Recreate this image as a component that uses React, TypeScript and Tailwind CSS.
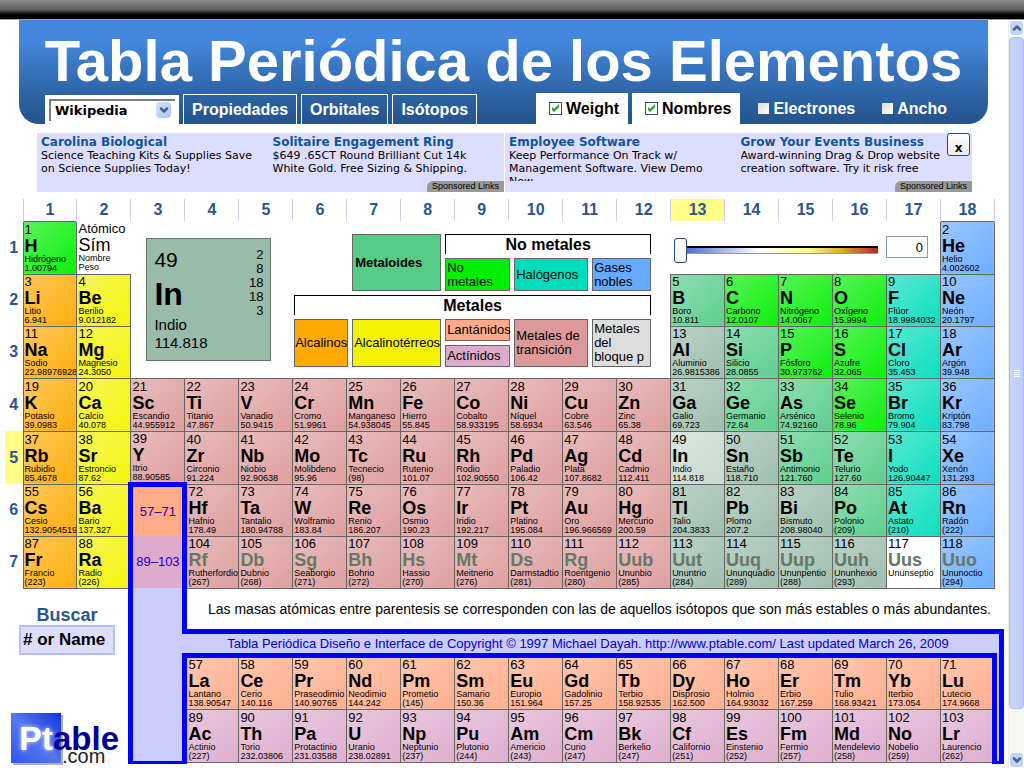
import { useState } from "react"
import { ChevronDown, ChevronUp } from "lucide-react"

type Category =
  | "alkali"
  | "alkaline"
  | "transition"
  | "poor"
  | "metalloid"
  | "nonmetal"
  | "halogen"
  | "noble"
  | "lanthanide"
  | "actinide"
  | "unknown"
  | "selected"

type ElementRow = [number, string, string, string, Category]

const cellColors: Record<Category, string> = {
  alkali: "bg-[#ffaa00]",
  alkaline: "bg-[#f3f300]",
  transition: "bg-[#dd9999]",
  poor: "bg-[#99bbaa]",
  metalloid: "bg-[#55cc88]",
  nonmetal: "bg-[#00ee00]",
  halogen: "bg-[#00ddbb]",
  noble: "bg-[#66aaff]",
  lanthanide: "bg-[#ffaa88]",
  actinide: "bg-[#ddaacc]",
  unknown: "bg-white",
  selected: "bg-[#c4d8ce]",
}

const row1: ElementRow[] = [
  [1, "H", "Hidrógeno", "1.00794", "nonmetal"],
  [2, "He", "Helio", "4.002602", "noble"],
]

const row2: ElementRow[] = [
  [3, "Li", "Litio", "6.941", "alkali"],
  [4, "Be", "Berilio", "9.012182", "alkaline"],
  [5, "B", "Boro", "10.811", "metalloid"],
  [6, "C", "Carbono", "12.0107", "nonmetal"],
  [7, "N", "Nitrógeno", "14.0067", "nonmetal"],
  [8, "O", "Oxígeno", "15.9994", "nonmetal"],
  [9, "F", "Flúor", "18.9984032", "halogen"],
  [10, "Ne", "Neón", "20.1797", "noble"],
]

const row3: ElementRow[] = [
  [11, "Na", "Sodio", "22.98976928", "alkali"],
  [12, "Mg", "Magnesio", "24.3050", "alkaline"],
  [13, "Al", "Aluminio", "26.9815386", "poor"],
  [14, "Si", "Silicio", "28.0855", "metalloid"],
  [15, "P", "Fósforo", "30.973762", "nonmetal"],
  [16, "S", "Azufre", "32.065", "nonmetal"],
  [17, "Cl", "Cloro", "35.453", "halogen"],
  [18, "Ar", "Argón", "39.948", "noble"],
]

const row4: ElementRow[] = [
  [19, "K", "Potasio", "39.0983", "alkali"],
  [20, "Ca", "Calcio", "40.078", "alkaline"],
  [21, "Sc", "Escandio", "44.955912", "transition"],
  [22, "Ti", "Titanio", "47.867", "transition"],
  [23, "V", "Vanadio", "50.9415", "transition"],
  [24, "Cr", "Cromo", "51.9961", "transition"],
  [25, "Mn", "Manganeso", "54.938045", "transition"],
  [26, "Fe", "Hierro", "55.845", "transition"],
  [27, "Co", "Cobalto", "58.933195", "transition"],
  [28, "Ni", "Níquel", "58.6934", "transition"],
  [29, "Cu", "Cobre", "63.546", "transition"],
  [30, "Zn", "Zinc", "65.38", "transition"],
  [31, "Ga", "Galio", "69.723", "poor"],
  [32, "Ge", "Germanio", "72.64", "metalloid"],
  [33, "As", "Arsénico", "74.92160", "metalloid"],
  [34, "Se", "Selenio", "78.96", "nonmetal"],
  [35, "Br", "Bromo", "79.904", "halogen"],
  [36, "Kr", "Kriptón", "83.798", "noble"],
]

const row5: ElementRow[] = [
  [37, "Rb", "Rubidio", "85.4678", "alkali"],
  [38, "Sr", "Estroncio", "87.62", "alkaline"],
  [39, "Y", "Itrio", "88.90585", "transition"],
  [40, "Zr", "Circonio", "91.224", "transition"],
  [41, "Nb", "Niobio", "92.90638", "transition"],
  [42, "Mo", "Molibdeno", "95.96", "transition"],
  [43, "Tc", "Tecnecio", "(98)", "transition"],
  [44, "Ru", "Rutenio", "101.07", "transition"],
  [45, "Rh", "Rodio", "102.90550", "transition"],
  [46, "Pd", "Paladio", "106.42", "transition"],
  [47, "Ag", "Plata", "107.8682", "transition"],
  [48, "Cd", "Cadmio", "112.411", "transition"],
  [49, "In", "Indio", "114.818", "selected"],
  [50, "Sn", "Estaño", "118.710", "poor"],
  [51, "Sb", "Antimonio", "121.760", "metalloid"],
  [52, "Te", "Telurio", "127.60", "metalloid"],
  [53, "I", "Yodo", "126.90447", "halogen"],
  [54, "Xe", "Xenón", "131.293", "noble"],
]

const row6: ElementRow[] = [
  [55, "Cs", "Cesio", "132.9054519", "alkali"],
  [56, "Ba", "Bario", "137.327", "alkaline"],
  [72, "Hf", "Hafnio", "178.49", "transition"],
  [73, "Ta", "Tantalio", "180.94788", "transition"],
  [74, "W", "Wolframio", "183.84", "transition"],
  [75, "Re", "Renio", "186.207", "transition"],
  [76, "Os", "Osmio", "190.23", "transition"],
  [77, "Ir", "Iridio", "192.217", "transition"],
  [78, "Pt", "Platino", "195.084", "transition"],
  [79, "Au", "Oro", "196.966569", "transition"],
  [80, "Hg", "Mercurio", "200.59", "transition"],
  [81, "Tl", "Talio", "204.3833", "poor"],
  [82, "Pb", "Plomo", "207.2", "poor"],
  [83, "Bi", "Bismuto", "208.98040", "poor"],
  [84, "Po", "Polonio", "(209)", "metalloid"],
  [85, "At", "Astato", "(210)", "halogen"],
  [86, "Rn", "Radón", "(222)", "noble"],
]

const row7: ElementRow[] = [
  [87, "Fr", "Francio", "(223)", "alkali"],
  [88, "Ra", "Radio", "(226)", "alkaline"],
  [104, "Rf", "Rutherfordio", "(267)", "transition"],
  [105, "Db", "Dubnio", "(268)", "transition"],
  [106, "Sg", "Seaborgio", "(271)", "transition"],
  [107, "Bh", "Bohrio", "(272)", "transition"],
  [108, "Hs", "Hassio", "(270)", "transition"],
  [109, "Mt", "Meitnerio", "(276)", "transition"],
  [110, "Ds", "Darmstadtio", "(281)", "transition"],
  [111, "Rg", "Roentgenio", "(280)", "transition"],
  [112, "Uub", "Ununbio", "(285)", "transition"],
  [113, "Uut", "Ununtrio", "(284)", "poor"],
  [114, "Uuq", "Ununquadio", "(289)", "poor"],
  [115, "Uup", "Ununpentio", "(288)", "poor"],
  [116, "Uuh", "Ununhexio", "(293)", "poor"],
  [117, "Uus", "Ununseptio", "", "unknown"],
  [118, "Uuo", "Ununoctio", "(294)", "noble"],
]

const lanthanides: ElementRow[] = [
  [57, "La", "Lantano", "138.90547", "lanthanide"],
  [58, "Ce", "Cerio", "140.116", "lanthanide"],
  [59, "Pr", "Praseodimio", "140.90765", "lanthanide"],
  [60, "Nd", "Neodimio", "144.242", "lanthanide"],
  [61, "Pm", "Prometio", "(145)", "lanthanide"],
  [62, "Sm", "Samario", "150.36", "lanthanide"],
  [63, "Eu", "Europio", "151.964", "lanthanide"],
  [64, "Gd", "Gadolinio", "157.25", "lanthanide"],
  [65, "Tb", "Terbio", "158.92535", "lanthanide"],
  [66, "Dy", "Disprosio", "162.500", "lanthanide"],
  [67, "Ho", "Holmio", "164.93032", "lanthanide"],
  [68, "Er", "Erbio", "167.259", "lanthanide"],
  [69, "Tm", "Tulio", "168.93421", "lanthanide"],
  [70, "Yb", "Iterbio", "173.054", "lanthanide"],
  [71, "Lu", "Lutecio", "174.9668", "lanthanide"],
]

const actinides: ElementRow[] = [
  [89, "Ac", "Actinio", "(227)", "actinide"],
  [90, "Th", "Torio", "232.03806", "actinide"],
  [91, "Pa", "Protactinio", "231.03588", "actinide"],
  [92, "U", "Uranio", "238.02891", "actinide"],
  [93, "Np", "Neptunio", "(237)", "actinide"],
  [94, "Pu", "Plutonio", "(244)", "actinide"],
  [95, "Am", "Americio", "(243)", "actinide"],
  [96, "Cm", "Curio", "(247)", "actinide"],
  [97, "Bk", "Berkelio", "(247)", "actinide"],
  [98, "Cf", "Californio", "(251)", "actinide"],
  [99, "Es", "Einstenio", "(252)", "actinide"],
  [100, "Fm", "Fermio", "(257)", "actinide"],
  [101, "Md", "Mendelevio", "(258)", "actinide"],
  [102, "No", "Nobelio", "(259)", "actinide"],
  [103, "Lr", "Laurencio", "(262)", "actinide"],
]

const ads = [
  [
    { title: "Carolina Biological", lines: ["Science Teaching Kits & Supplies Save", "on Science Supplies Today!"] },
    { title: "Solitaire Engagement Ring", lines: ["$649 .65CT Round Brilliant Cut 14k", "White Gold. Free Sizing & Shipping."] },
  ],
  [
    { title: "Employee Software", lines: ["Keep Performance On Track w/", "Management Software. View Demo", "Now"] },
    { title: "Grow Your Events Business", lines: ["Award-winning Drag & Drop website", "creation software. Try it risk free"] },
  ],
]

const groups = [1, 2, 3, 4, 5, 6, 7, 8, 9, 10, 11, 12, 13, 14, 15, 16, 17, 18]

function ElementCell({ element }: { element: ElementRow }) {
  const [number, symbol, name, weight, category] = element
  const shade = category === "unknown" ? "" : "bg-linear-to-br from-white/35 to-white/5"
  const edge =
    category === "lanthanide" ? "border-t-[5px] border-t-[#0000ff]" : ""

  return (
    <td className={`overflow-hidden border border-[#666666] whitespace-nowrap ${cellColors[category]} ${shade} ${edge}`}>
      <div className="h-[50px] pl-px">
        <div className="text-[13px] leading-[14px]">{number}</div>
        <div className={`text-lg leading-[18px] font-bold ${number > 103 ? "text-[#667766]" : ""}`}>{symbol}</div>
        <div className="text-[9px] leading-[9px]">{name}</div>
        <div className="text-[9px] leading-[9px]">{weight}</div>
      </div>
    </td>
  )
}

function Cells({ elements }: { elements: ElementRow[] }) {
  return (
    <>
      {elements.map((element) => (
        <ElementCell key={element[0]} element={element} />
      ))}
    </>
  )
}

function Period({ number, active }: { number: number; active?: boolean }) {
  return (
    <th scope="row" className={`text-base text-[#2a5590] ${active ? "bg-[#ffff88]" : ""}`}>
      {number}
    </th>
  )
}

function DetailPanel() {
  return (
    <div className="mt-1 flex h-[123px] w-[125px] justify-between border border-[#667766] bg-[#99bbaa] px-[7px] py-[9px]">
      <div>
        <div className="text-[21px] leading-6">49</div>
        <div className="my-1 text-[32px] leading-9 font-bold">In</div>
        <div className="text-[15px] leading-[18px]">Indio</div>
        <div className="text-[15px] leading-[18px]">114.818</div>
      </div>
      <div className="text-right text-[13px] leading-[14px]">
        <div>2</div>
        <div>8</div>
        <div>18</div>
        <div>18</div>
        <div>3</div>
      </div>
    </div>
  )
}

function Legend() {
  return (
    <div className="grid grid-cols-[54px_89px_65px_74px_59px] grid-rows-[20px_33px_20px_22px_22px] gap-1 text-[13px] leading-[14px]">
      <div className="col-start-2 row-span-2 row-start-1 flex items-center border border-[#666666] bg-[#55cc88] px-0.5 font-bold">
        Metaloides
      </div>
      <div className="col-span-3 col-start-3 row-start-1 border border-b-0 border-black text-center text-base leading-5 font-bold">
        No metales
      </div>
      <div className="col-start-3 row-start-2 flex items-center border border-[#666666] bg-[#00ee00] pl-px">
        No
        <br />
        metales
      </div>
      <div className="col-start-4 row-start-2 flex items-center border border-[#666666] bg-[#00ddbb] pl-px">
        Halógenos
      </div>
      <div className="col-start-5 row-start-2 flex items-center border border-[#666666] bg-[#66aaff] pl-px">
        Gases
        <br />
        nobles
      </div>
      <div className="col-span-5 col-start-1 row-start-3 border border-b-0 border-black text-center text-base leading-5 font-bold">
        Metales
      </div>
      <div className="col-start-1 row-span-2 row-start-4 flex items-center border border-[#666666] bg-[#ffaa00]">
        Alcalinos
      </div>
      <div className="col-start-2 row-span-2 row-start-4 flex items-center border border-[#666666] bg-[#f3f300] pl-px">
        Alcalinotérreos
      </div>
      <div className="col-start-3 row-start-4 flex items-center border border-[#666666] bg-[#ffaa88] pl-px">
        Lantánidos
      </div>
      <div className="col-start-3 row-start-5 flex items-center border border-[#666666] bg-[#ddaacc] pl-px">
        Actínidos
      </div>
      <div className="col-start-4 row-span-2 row-start-4 flex items-center border border-[#666666] bg-[#dd9999] pl-px">
        Metales de
        <br />
        transición
      </div>
      <div className="col-start-5 row-span-2 row-start-4 flex items-center border border-[#666666] bg-[#dddddd] pl-px">
        Metales del bloque p
      </div>
    </div>
  )
}

function Toggle({ label, defaultChecked }: { label: string; defaultChecked?: boolean }) {
  const [checked, setChecked] = useState(!!defaultChecked)

  return (
    <label
      className={`flex items-center gap-1 pr-[9px] font-bold ${checked ? "bg-white pl-[13px] text-black" : "pl-3.5 text-white"}`}
    >
      <span className="grid">
        <input
          type="checkbox"
          checked={checked}
          onChange={(e) => setChecked(e.target.checked)}
          className={`col-start-1 row-start-1 appearance-none ${checked ? "size-[13px] border border-[#1c5180] bg-white" : "size-[11px] bg-linear-to-br from-[#dcdcd7] to-white"}`}
        />
        {checked && (
          <svg className="pointer-events-none col-start-1 row-start-1 size-[13px]" viewBox="0 0 13 13" aria-hidden="true">
            <path d="M3 5v3l2 2 5-5V2L5 7z" fill="#21a121" />
          </svg>
        )}
      </span>
      {label}
    </label>
  )
}

function Header() {
  return (
    <header className="mr-5 ml-[19px] flex h-[104px] flex-col justify-between rounded-b-[20px] bg-linear-to-b from-[#4488dd] from-20% via-[#3068ac] via-65% to-[#24528c]">
      <h1 className="pt-[9px] text-center text-[58px] leading-[64px] font-bold whitespace-nowrap text-white">
        Tabla Periódica de los Elementos
      </h1>
      <nav className="flex justify-between pr-8 pl-[26px]">
        <div className="flex h-[31px] items-end gap-1">
          <div className="flex h-[29px] w-[134px] items-center bg-white px-1">
            <span className="grid w-full">
              <select
                aria-label="Fuente"
                className="col-start-1 row-start-1 h-[22px] appearance-none border-t-2 border-l-2 border-[#7f7f70] bg-white pl-1 font-['DejaVu_Sans'] text-[13px] font-bold text-black"
              >
                <option>Wikipedia</option>
              </select>
              <span className="pointer-events-none col-start-1 row-start-1 mr-1 flex h-4 w-[15px] items-center justify-center place-self-center justify-self-end rounded-sm bg-linear-to-br from-[#d6e2fc] to-[#aac2f4]">
                <ChevronDown className="size-3 text-[#4d6185]" strokeWidth={5} />
              </span>
            </span>
          </div>
          <a href="#" className="h-[30px] border border-b-0 border-white px-2 leading-[30px] font-bold text-white">
            Propiedades
          </a>
          <a href="#" className="h-[30px] border border-b-0 border-white px-2 leading-[30px] font-bold text-white">
            Orbitales
          </a>
          <a href="#" className="h-[30px] border border-b-0 border-white px-2 leading-[30px] font-bold text-white">
            Isótopos
          </a>
        </div>
        <div className="flex h-[31px] gap-1">
          <Toggle label="Weight" defaultChecked />
          <Toggle label="Nombres" defaultChecked />
          <Toggle label="Electrones" />
          <Toggle label="Ancho" />
        </div>
      </nav>
    </header>
  )
}

function AdBanner() {
  return (
    <div className="relative mt-[9px] mr-9 ml-[37px] grid grid-cols-2 gap-px font-['DejaVu_Sans']">
      {ads.map((pair, i) => (
        <div key={i} className="relative grid h-[59px] grid-cols-2 bg-[#ddddff] pt-0.5 pl-1">
          {pair.map((ad) => (
            <div key={ad.title} className="h-[46px] overflow-hidden text-[11px] leading-[13px] whitespace-nowrap">
              <a href="#" className="block text-xs leading-[14px] font-bold text-[#115599]">
                {ad.title}
              </a>
              {ad.lines.map((line) => (
                <div key={line}>{line}</div>
              ))}
            </div>
          ))}
          <span className="absolute right-0 bottom-0 rounded-tl-md bg-[#999999] px-[5px] font-['Liberation_Sans'] text-[9px] leading-[11px]">
            Sponsored Links
          </span>
        </div>
      ))}
      <button
        aria-label="Cerrar"
        className="absolute top-0 right-0.5 h-[23px] w-[23px] rounded-[3px] border border-[#1f4b80] bg-linear-to-b from-white to-[#ecebe6] pt-1.5 text-xs leading-3 font-bold"
      >
        x
      </button>
    </div>
  )
}

function Logo() {
  return (
    <svg className="mt-[57px] -mb-2 ml-1.5 h-[56px] w-[112px]" viewBox="0 0 112 56" aria-label="Ptable.com">
      <defs>
        <linearGradient id="logoBlue" x1="0" y1="1" x2="1" y2="0">
          <stop offset="0" stopColor="#3355ee" />
          <stop offset="0.5" stopColor="#5577ee" />
          <stop offset="1" stopColor="#1133dd" />
        </linearGradient>
        <filter id="glow">
          <feGaussianBlur stdDeviation="2" />
        </filter>
      </defs>
      <rect x="2" y="3" width="50" height="50" fill="#000" opacity="0.3" />
      <rect x="0" y="1" width="50" height="50" fill="url(#logoBlue)" />
      <g fontFamily="Liberation Sans" fontWeight="bold">
        <text x="8" y="38" fontSize="34" fill="#fff" filter="url(#glow)" opacity="0.8">Pt</text>
        <text x="8" y="38" fontSize="34" fill="#fff">Pt</text>
        <text x="42" y="38" fontSize="33" fill="#000099">able</text>
      </g>
      <text x="51" y="51" fontSize="20" fontFamily="Liberation Sans" fill="#222">.com</text>
    </svg>
  )
}

function PeriodicTable() {
  const [temperature, setTemperature] = useState("0")

  return (
    <table className="mt-[7px] w-full table-fixed border-collapse">
      <colgroup>
        <col className="w-[18px]" />
        {groups.map((group) => (
          <col key={group} />
        ))}
        <col className="w-[7px]" />
      </colgroup>
      <thead>
        <tr className="h-[22px]">
          <td />
          {groups.map((group) => (
            <th
              key={group}
              scope="col"
              className={`border-x border-[#ccccee] text-base leading-5 text-[#2a5590] ${group === 13 ? "bg-[#ffff88]" : ""}`}
            >
              {group}
            </th>
          ))}
          <td />
        </tr>
      </thead>
      <tbody>
        <tr className="h-[53px]">
          <Period number={1} />
          <Cells elements={row1.slice(0, 1)} />
          <td className="pl-px">
            <div className="text-[13px] leading-[14px]">Atómico</div>
            <div className="text-lg leading-[18px]">Sím</div>
            <div className="text-[9px] leading-[9px]">Nombre</div>
            <div className="text-[9px] leading-[9px]">Peso</div>
          </td>
          <td colSpan={10} rowSpan={3} className="pt-[13px] pr-[19px] pl-[15px] align-top">
            <div className="flex justify-between">
              <DetailPanel />
              <Legend />
            </div>
          </td>
          <td colSpan={5} className="pt-1.5 pr-3 pl-[3px]">
            <div className="flex items-center gap-2">
              <input
                type="range"
                min="0"
                max="6000"
                aria-label="Temperatura"
                value={temperature}
                onChange={(e) => setTemperature(e.target.value)}
                className="h-2 w-full min-w-0 flex-1 appearance-none border-t-2 border-b border-t-black border-b-[#999999] bg-[linear-gradient(90deg,#3355cc,#ffffff_42%,#ffff88_65%,#ddaa33_82%,#bb2222)] [&::-webkit-slider-thumb]:h-[25px] [&::-webkit-slider-thumb]:w-[13px] [&::-webkit-slider-thumb]:appearance-none [&::-webkit-slider-thumb]:rounded-[3px] [&::-webkit-slider-thumb]:border [&::-webkit-slider-thumb]:border-[#1f4b80] [&::-webkit-slider-thumb]:bg-[#f8f8f4]"
              />
              <input
                type="text"
                aria-label="Kelvin"
                value={temperature}
                onChange={(e) => setTemperature(e.target.value)}
                className="mb-1.5 h-[22px] w-[42px] border border-[#7f9db9] bg-white pr-1 text-right text-[13px]"
              />
            </div>
          </td>
          <Cells elements={row1.slice(1)} />
        </tr>
        <tr className="h-[52px]">
          <Period number={2} />
          <Cells elements={row2} />
        </tr>
        <tr className="h-[52px]">
          <Period number={3} />
          <Cells elements={row3} />
        </tr>
        <tr className="h-[53px]">
          <Period number={4} />
          <Cells elements={row4} />
        </tr>
        <tr className="h-[53px]">
          <Period number={5} active />
          <Cells elements={row5} />
        </tr>
        <tr className="h-[52px]">
          <Period number={6} />
          <Cells elements={row6.slice(0, 2)} />
          <td className="border-x-[5px] border-t-[5px] border-[#0000ff] bg-[#ffaa88] text-center text-[13px] whitespace-nowrap text-[#2200bb]">
            57–71
          </td>
          <Cells elements={row6.slice(2)} />
        </tr>
        <tr className="h-[52px]">
          <Period number={7} />
          <Cells elements={row7.slice(0, 2)} />
          <td className="border-x-[5px] border-[#0000ff] bg-[#ddaacc] text-center text-[13px] whitespace-nowrap text-[#2200bb]">
            89–103
          </td>
          <Cells elements={row7.slice(2)} />
        </tr>
        <tr className="h-[43px]">
          <td colSpan={3} rowSpan={4} className="align-top">
            <div className="ml-3.5 flex w-24 flex-col pt-4">
              <label htmlFor="search" className="text-center text-lg leading-5 font-bold text-[#2a5590]">
                Buscar
              </label>
              <input
                id="search"
                type="text"
                defaultValue="# or Name"
                className="h-[30px] border-2 border-[#bbbbff] bg-[#ddddff] px-0.5 text-[17px] font-bold"
              />
            </div>
            <Logo />
          </td>
          <td className="border-x-[5px] border-[#0000ff] bg-[#ccccff]" />
          <td colSpan={16} className="pl-2.5 text-center text-sm whitespace-nowrap">
            Las masas atómicas entre parentesis se corresponden con las de aquellos isótopos que son más estables o más
            abundantes.
          </td>
        </tr>
        <tr className="h-6">
          <td className="border-l-[5px] border-[#0000ff] bg-[#ccccff]" />
          <td
            colSpan={16}
            className="border-t-[5px] border-r-[5px] border-[#0000ff] bg-[#ccccff] pt-0.5 pr-2 text-center text-[13px] leading-[14px] whitespace-nowrap text-[#0000cc]"
          >
            Tabla Periódica Diseño e Interface de Copyright © 1997 Michael Dayah. http://www.ptable.com/ Last updated
            March 26, 2009
          </td>
        </tr>
        <tr className="h-[54px]">
          <td rowSpan={2} className="border-x-[5px] border-b-[3px] border-[#0000ff] bg-[#ccccff]" />
          <Cells elements={lanthanides} />
          <td rowSpan={2} className="border-x-[5px] border-b-[3px] border-[#0000ff] bg-[#ccccff]" />
        </tr>
        <tr className="h-[53px]">
          <Cells elements={actinides} />
        </tr>
      </tbody>
    </table>
  )
}

function Scrollbar() {
  return (
    <div className="flex w-4 shrink-0 flex-col border-l border-[#eeeee8] bg-[#f6f6f2]">
      <button
        aria-label="Subir"
        className="flex h-4 items-center justify-center rounded-sm border border-white bg-[#c2d3fb]"
      >
        <ChevronUp className="size-3 text-[#4d6185]" strokeWidth={5} />
      </button>
      <div className="mt-px flex basis-[672px] flex-col items-center justify-center gap-px rounded-sm border border-[#a9bff0] bg-linear-to-r from-[#c8d6fb] to-[#bccdf8]">
        <span className="h-px w-1.5 bg-white" />
        <span className="h-px w-1.5 bg-white" />
        <span className="h-px w-1.5 bg-white" />
        <span className="h-px w-1.5 bg-white" />
      </div>
      <button
        aria-label="Bajar"
        className="mt-auto flex h-4 items-center justify-center rounded-sm border border-white bg-[#c2d3fb]"
      >
        <ChevronDown className="size-3 text-[#4d6185]" strokeWidth={5} />
      </button>
    </div>
  )
}

export default function App() {
  return (
    <div className="flex min-h-screen flex-col bg-white font-['Liberation_Sans',sans-serif] text-black">
      <div className="h-5 border-b border-[#a09c94] bg-linear-to-b from-[#8c8c8c] via-[#606060] via-50% to-black to-85%" />
      <div className="flex flex-1">
        <main className="min-w-0 flex-1">
          <Header />
          <AdBanner />
          <div className="pr-1 pl-[5px]">
            <PeriodicTable />
          </div>
        </main>
        <Scrollbar />
      </div>
    </div>
  )
}
